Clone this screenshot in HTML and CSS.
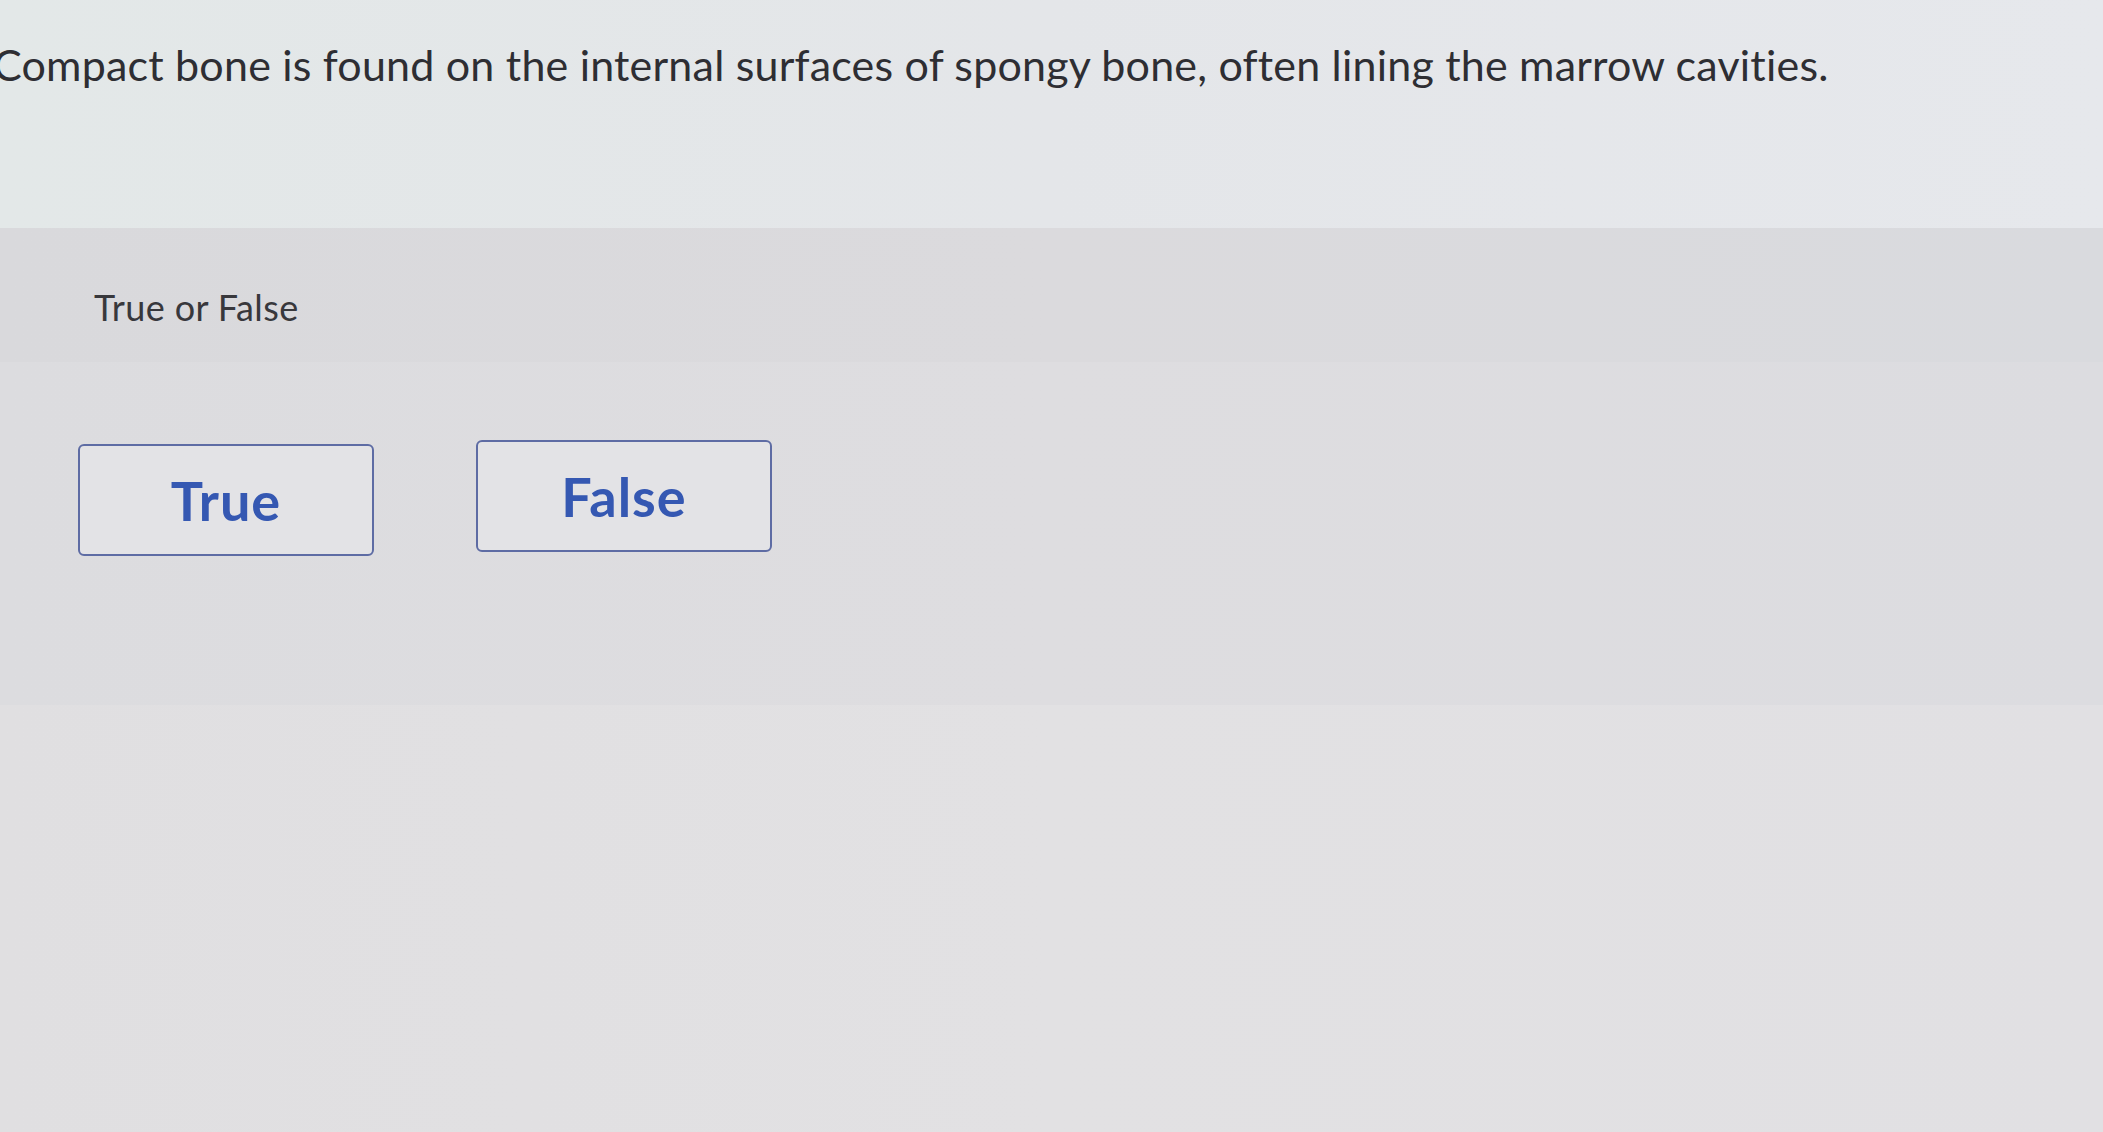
FILE: index.html
```html
<!DOCTYPE html>
<html lang="en">
<head>
<meta charset="utf-8">
<title>True or False</title>
<link rel="stylesheet" href="styles.css">
</head>
<body>
<main class="page">
  <section class="question">
    <p class="question-text">Compact bone is found on the internal surfaces of spongy bone, often lining the marrow cavities.</p>
  </section>
  <section class="prompt">
    <p class="prompt-label">True or False</p>
  </section>
  <section class="answers">
    <button class="answer answer-true" type="button">True</button>
    <button class="answer answer-false" type="button">False</button>
  </section>
  <section class="rest"></section>
</main>
</body>
</html>
```

FILE: styles.css
```css
html, body {
  margin: 0;
  padding: 0;
  height: 100%;
}

body {
  font-family: Lato, "Open Sans", "Liberation Sans", sans-serif;
  background: #e1e0e3;
  overflow: hidden;
}

.page {
  display: flex;
  flex-direction: column;
  height: 100vh;
}

.question {
  height: 228px;
  flex: 0 0 auto;
  background: linear-gradient(90deg, #e3e8e8 0%, #e4e6e9 50%, #e6e8ec 100%);
  padding-top: 39px;
  box-sizing: border-box;
}

.question-text {
  margin: 0 0 0 -7px;
  font-size: 43px;
  line-height: 1.2;
  color: #2e2e33;
  white-space: nowrap;
  letter-spacing: 0.2px;
}

.prompt {
  height: 134px;
  flex: 0 0 auto;
  background: linear-gradient(90deg, #d9d9dc 0%, #dbdadd 50%, #d9dade 100%);
  padding: 58px 0 0 94px;
  box-sizing: border-box;
}

.prompt-label {
  margin: 0;
  font-size: 36px;
  line-height: 1.2;
  color: #38383c;
  letter-spacing: 0.4px;
}

.answers {
  height: 343px;
  flex: 0 0 auto;
  background: linear-gradient(90deg, #dcdcdf 0%, #dedde0 50%, #dcdce0 100%);
  display: flex;
  align-items: flex-start;
  gap: 102px;
  padding: 82px 0 0 78px;
  box-sizing: border-box;
}

.answer {
  width: 296px;
  height: 112px;
  border: 2px solid #5e6ca4;
  border-radius: 6px;
  background: #e3e3e6;
  color: #3558b2;
  font-family: Lato, "Open Sans", "Liberation Sans", sans-serif;
  font-weight: 700;
  font-size: 54px;
  letter-spacing: 1px;
  padding: 0;
  cursor: pointer;
}

.answer-false {
  margin-top: -4px;
}

.rest {
  flex: 1 1 auto;
  background: linear-gradient(90deg, #e0dfe1 0%, #e2e1e3 50%, #e1e0e3 100%);
}
```
